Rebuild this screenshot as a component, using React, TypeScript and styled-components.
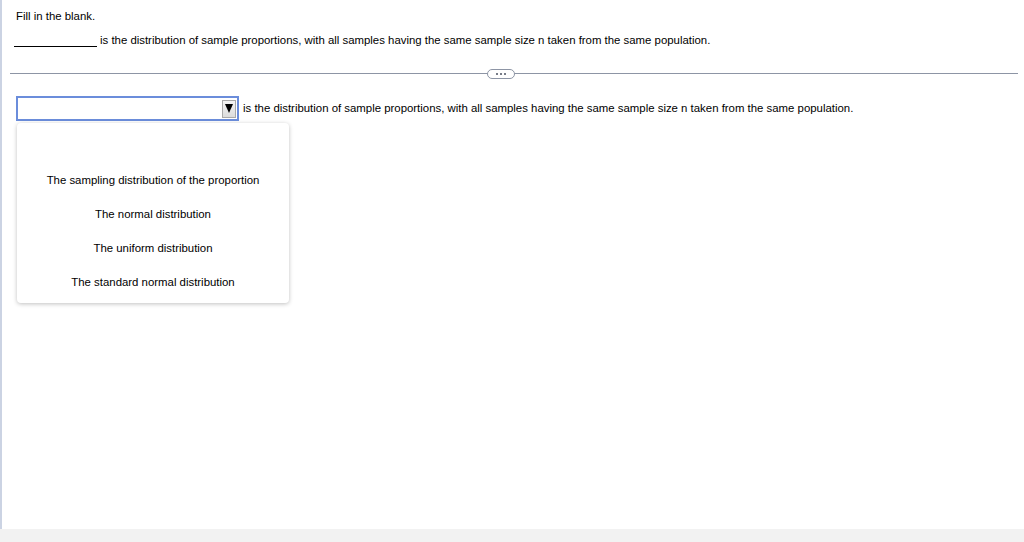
import React from "react";
import styled, { createGlobalStyle } from "styled-components";

const GlobalStyle = createGlobalStyle`
  html, body {
    margin: 0;
    padding: 0;
    background: #ffffff;
  }
  body {
    font-family: "Liberation Sans", Arial, sans-serif;
    font-size: 11.4px;
    color: #000;
  }
`;

const Page = styled.div`
  display: flex;
  flex-direction: column;
  width: 1024px;
  height: 542px;
  overflow: hidden;
`;

const Main = styled.div`
  flex: 1;
  border-left: 2px solid #cbd3e3;
  display: flex;
  flex-direction: column;
`;

const Footer = styled.div`
  height: 13px;
  background: #f2f2f2;
`;

const Question = styled.div`
  padding: 10px 0 0 12px;
  line-height: 13px;
`;

const Line = styled.div<{ $gap?: number; $indent?: number }>`
  margin-top: ${(p) => p.$gap ?? 0}px;
  padding-left: ${(p) => p.$indent ?? 0}px;
  display: flex;
  align-items: flex-end;
`;

const Blank = styled.span`
  display: inline-block;
  width: 83px;
  height: 11px;
  border-bottom: 1px solid #000;
  margin-right: 3px;
`;

const Divider = styled.div`
  margin: 26px 6px 0 8px;
  height: 1px;
  background: #8d95a5;
  display: flex;
  justify-content: center;
  align-items: center;
`;

const MoreButton = styled.div`
  width: 26px;
  height: 8px;
  border: 1px solid #8d95a5;
  border-radius: 5px;
  background: #fff;
  display: flex;
  justify-content: center;
  align-items: center;
  gap: 2px;
  margin-right: 26px;
`;

const Dot = styled.span`
  width: 2px;
  height: 2px;
  border-radius: 1px;
  background: #4a5160;
`;

const AnswerRow = styled.div`
  position: relative;
  margin: 22px 0 0 14px;
  display: flex;
  align-items: flex-start;
  gap: 4px;
`;

const Select = styled.div`
  width: 218px;
  height: 21px;
  border: 2px solid #6b8ddb;
  background: #fff;
  display: flex;
  justify-content: flex-end;
  align-items: center;
  padding-right: 1px;
`;

const ArrowBox = styled.div`
  width: 12px;
  height: 16px;
  border: 1px solid #a9a9a9;
  background: linear-gradient(#f4f4f4, #dcdcdc);
  display: flex;
  justify-content: center;
  align-items: center;
`;

const RowText = styled.span`
  margin-top: 6px;
  line-height: 13px;
`;

const Menu = styled.div`
  position: absolute;
  top: 27px;
  left: 1px;
  width: 272px;
  height: 180px;
  background: #fff;
  border-radius: 4px;
  box-shadow: 0 1px 4px rgba(0, 0, 0, 0.25);
  box-sizing: border-box;
  padding-top: 51px;
  display: flex;
  flex-direction: column;
  align-items: center;
`;

const Option = styled.div`
  height: 34px;
  line-height: 13px;
  text-align: center;
  flex-shrink: 0;
`;

const options = [
  "The sampling distribution of the proportion",
  "The normal distribution",
  "The uniform distribution",
  "The standard normal distribution",
];

const sentence =
  "is the distribution of sample proportions, with all samples having the same sample size n taken from the same population.";

export default function App() {
  return (
    <Page>
      <GlobalStyle />
      <Main>
        <Question>
          <Line $indent={2}>Fill in the blank.</Line>
          <Line $gap={11}>
            <Blank />
            {sentence}
          </Line>
        </Question>
        <Divider>
          <MoreButton>
            <Dot />
            <Dot />
            <Dot />
          </MoreButton>
        </Divider>
        <AnswerRow>
          <Select>
            <ArrowBox>
              <svg width="8" height="9" viewBox="0 0 8 9">
                <polygon points="0,0 8,0 4,9" fill="#000" />
              </svg>
            </ArrowBox>
          </Select>
          <RowText>{sentence}</RowText>
          <Menu>
            {options.map((o) => (
              <Option key={o}>{o}</Option>
            ))}
          </Menu>
        </AnswerRow>
      </Main>
      <Footer />
    </Page>
  );
}
